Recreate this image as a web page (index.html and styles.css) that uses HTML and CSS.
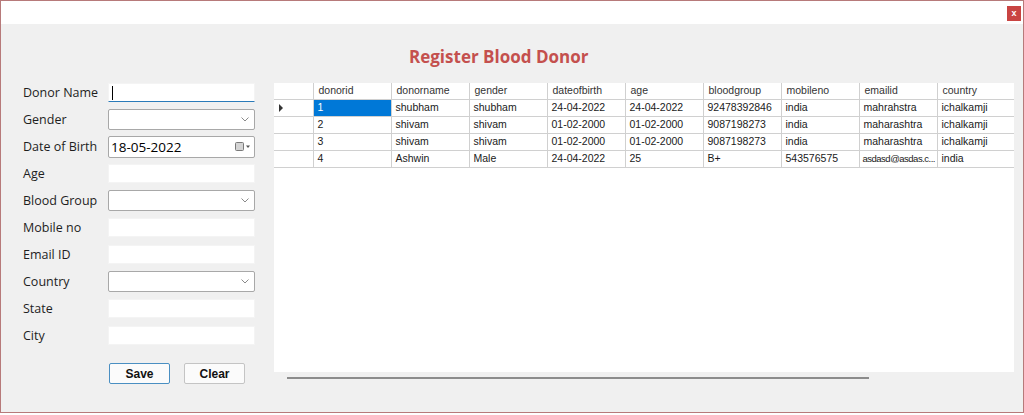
FILE: index.html
```
<!DOCTYPE html>
<html>
<head>
<meta charset="utf-8">
<link rel="stylesheet" href="styles.css">
</head>
<body>
<div class="window">
  <div class="titlebar"><span class="close">x</span></div>
  <div class="body">
    <h1 class="title">Register Blood Donor</h1>
    <div class="main">
      <div class="form">
        <div class="row"><label>Donor Name</label><div class="text focus"><span class="caret"></span></div></div>
        <div class="row"><label>Gender</label><div class="combo"><svg class="chev" width="8" height="5" viewBox="0 0 8 5"><path d="M0.5 0.5 L4 4 L7.5 0.5" fill="none" stroke="#8a8a8a" stroke-width="1"/></svg></div></div>
        <div class="row"><label>Date of Birth</label><div class="combo date"><span class="dval">18-05-2022</span><svg class="cal" width="16" height="10" viewBox="0 0 16 10"><rect x="0.5" y="0.5" width="8" height="8" rx="1" fill="#d4d4d4" stroke="#7a7a7a"/><path d="M11 3.5 L15 3.5 L13 6 Z" fill="#555"/></svg></div></div>
        <div class="row"><label>Age</label><div class="text"></div></div>
        <div class="row"><label>Blood Group</label><div class="combo"><svg class="chev" width="8" height="5" viewBox="0 0 8 5"><path d="M0.5 0.5 L4 4 L7.5 0.5" fill="none" stroke="#8a8a8a" stroke-width="1"/></svg></div></div>
        <div class="row"><label>Mobile no</label><div class="text"></div></div>
        <div class="row"><label>Email ID</label><div class="text"></div></div>
        <div class="row"><label>Country</label><div class="combo"><svg class="chev" width="8" height="5" viewBox="0 0 8 5"><path d="M0.5 0.5 L4 4 L7.5 0.5" fill="none" stroke="#8a8a8a" stroke-width="1"/></svg></div></div>
        <div class="row"><label>State</label><div class="text"></div></div>
        <div class="row"><label>City</label><div class="text"></div></div>
        <div class="buttons">
          <button class="btn primary">Save</button>
          <button class="btn">Clear</button>
        </div>
      </div>
      <div class="gridarea">
        <div class="gridwrap">
          <table class="grid">
            <colgroup><col class="rh"><col><col><col><col><col><col><col><col><col></colgroup>
            <thead>
              <tr><th class="rhc"></th><th>donorid</th><th>donorname</th><th>gender</th><th>dateofbirth</th><th>age</th><th>bloodgroup</th><th>mobileno</th><th>emailid</th><th>country</th></tr>
            </thead>
            <tbody>
              <tr><td class="rhc"><span class="arrow"></span></td><td class="sel">1</td><td>shubham</td><td>shubham</td><td>24-04-2022</td><td>24-04-2022</td><td>92478392846</td><td>india</td><td>mahrahstra</td><td>ichalkamji</td></tr>
              <tr><td class="rhc"></td><td>2</td><td>shivam</td><td>shivam</td><td>01-02-2000</td><td>01-02-2000</td><td>9087198273</td><td>india</td><td>maharashtra</td><td>ichalkamji</td></tr>
              <tr><td class="rhc"></td><td>3</td><td>shivam</td><td>shivam</td><td>01-02-2000</td><td>01-02-2000</td><td>9087198273</td><td>india</td><td>maharashtra</td><td>ichalkamji</td></tr>
              <tr><td class="rhc"></td><td>4</td><td>Ashwin</td><td>Male</td><td>24-04-2022</td><td>25</td><td>B+</td><td>543576575</td><td class="trunc">asdasd@asdas.c...</td><td>india</td></tr>
            </tbody>
          </table>
        </div>
        <div class="hscroll"></div>
      </div>
    </div>
  </div>
</div>
</body>
</html>
```
FILE: styles.css
```
* { box-sizing: border-box; }
html, body { margin: 0; padding: 0; background: #ffffff; }
body { width: 1024px; height: 415px; overflow: hidden; font-family: "Open Sans", "Noto Sans", sans-serif; }

.window {
  width: 1024px;
  height: 413px;
  border: 1px solid #b77a7a;
  background: #f0f0f0;
  display: flex;
  flex-direction: column;
}
.titlebar {
  height: 23px;
  background: #ffffff;
  display: flex;
  justify-content: flex-end;
  align-items: flex-start;
  padding: 5px 2px 0 0;
}
.close {
  width: 14px;
  height: 15px;
  background: #c94442;
  color: #ffffff;
  font-family: "Liberation Sans", sans-serif;
  font-size: 9px;
  font-weight: bold;
  line-height: 14px;
  text-align: center;
}
.body { flex: 1; display: flex; flex-direction: column; }
.title {
  margin: 21px 0 0 408px;
  height: 38px;
  font-family: "Open Sans", sans-serif;
  font-size: 17px;
  font-weight: 700;
  color: #c4504e;
  line-height: 24px;
}
.main { display: flex; padding-left: 22px; }
.form { width: 233px; display: flex; flex-direction: column; }
.row {
  height: 27px;
  display: flex;
  align-items: flex-start;
}
.row label {
  width: 85px;
  font-size: 12.5px;
  color: #1e1e1e;
  line-height: 19px;
  padding-top: 0;
}
.text {
  width: 147px;
  height: 19px;
  background: #ffffff;
  border: 1px solid #f4f4f4;
  position: relative;
}
.text.focus { border-bottom: 1px solid #2a7ab8; }
.caret {
  position: absolute;
  left: 3px;
  top: 2px;
  width: 1px;
  height: 14px;
  background: #000;
}
.combo {
  width: 147px;
  height: 21px;
  background: #ffffff;
  border: 1px solid #a8a8a8;
  border-radius: 2px;
  display: flex;
  align-items: center;
  justify-content: flex-end;
  padding-right: 5px;
  margin-top: -1px;
}
.combo.date { justify-content: space-between; padding-left: 2px; padding-right: 3px; height: 22px; }
.dval { font-size: 13.5px; color: #000; }
.buttons { display: flex; gap: 14px; padding-left: 86px; margin-top: 10px; }
.btn {
  width: 61px;
  height: 21px;
  background: #fbfbfb;
  border: 1px solid #c4c4c4;
  border-radius: 2px;
  font-family: "Liberation Sans", Arial, sans-serif;
  font-size: 12px;
  font-weight: bold;
  color: #111;
  padding: 0;
}
.btn.primary { border-color: #4a8fc2; }

.gridarea { margin-left: 18px; }
.gridwrap {
  width: 740px;
  height: 289px;
  background: #ffffff;
  overflow: hidden;
}
.grid {
  border-collapse: collapse;
  table-layout: fixed;
  width: 741px;
  font-family: "Liberation Sans", Arial, sans-serif;
  font-size: 10.5px;
  color: #1a1a1a;
}
.grid col { width: 78px; }
.grid col.rh { width: 39px; }
.grid th, .grid td {
  height: 17px;
  padding: 0 0 0 4px;
  border: 1px solid #d0d0d0;
  text-align: left;
  font-weight: normal;
  white-space: nowrap;
  overflow: hidden;
  line-height: 15px;
}
.grid th { height: 16px; color: #333; padding-left: 5px; }
.grid tr:first-child th { border-top: 0; }
.grid th:first-child, .grid td:first-child { border-left: 0; }
.grid td.rhc { position: relative; }
.grid td.sel { background: #0078d7; color: #ffffff; }
.grid td.trunc { font-size: 9.5px; letter-spacing: -0.5px; padding-left: 3px; }
.arrow {
  position: absolute;
  left: 5px;
  top: 4px;
  width: 0;
  height: 0;
  border-top: 4px solid transparent;
  border-bottom: 4px solid transparent;
  border-left: 4px solid #333;
}
.hscroll {
  margin: 5px 0 0 13px;
  width: 582px;
  height: 2px;
  background: #8c8c8c;
}
```
